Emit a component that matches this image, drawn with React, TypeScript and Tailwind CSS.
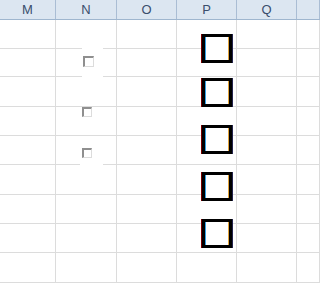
const cols = [
  { name: "M", w: "w-[56px]" },
  { name: "N", w: "w-[61px]" },
  { name: "O", w: "w-[60px]" },
  { name: "P", w: "w-[60px]" },
  { name: "Q", w: "w-[60px]" },
  { name: "", w: "flex-1" },
];

const rowHeights = [29, 28, 30, 29, 29, 30, 29, 29, 30];

const bigBoxes = [34, 78, 125, 172, 219];

const smallBoxes = [
  { top: 56, left: 83, size: "w-[11px] h-[11px]" },
  { top: 107, left: 82, size: "w-[10px] h-[10px]" },
  { top: 148, left: 82, size: "w-[10px] h-[10px]" },
];

function SmallCheck({ top, left, size }: { top: number; left: number; size: string }) {
  return (
    <div
      className={`absolute ${size} bg-white border-t-2 border-l-2 border-r border-b border-t-[#8f8f8f] border-l-[#8f8f8f] border-r-[#dcdcdc] border-b-[#dcdcdc]`}
      style={{ top, left }}
    />
  );
}

function BigCheck({ top }: { top: number }) {
  return (
    <div
      className="absolute left-[202px] w-[30px] h-[29px] bg-white border-[3px] border-black shadow-[-1px_0_0_#7a0000,1px_0_0_#24244e,inset_1px_0_0_#35a0e6,inset_-1px_0_0_#e2a43a]"
      style={{ top }}
    />
  );
}

export default function App() {
  return (
    <div className="relative w-[320px] h-[287px] overflow-hidden bg-white font-['Liberation_Sans',Arial,sans-serif]">
      {/* column headers */}
      <div className="flex h-[20px] bg-[#dce6f1] border-b border-[#9fb6cf]">
        {cols.map((c, i) => (
          <div
            key={i}
            className={`${c.w} shrink-0 flex items-center justify-center pt-px border-r border-[#aabdd4] text-[13px] text-[#3a4e6c]`}
          >
            {c.name}
          </div>
        ))}
      </div>

      {/* grid body */}
      {rowHeights.map((h, r) => (
        <div key={r} className="flex" style={{ height: h }}>
          {cols.map((c, i) => (
            <div key={i} className={`${c.w} shrink-0 border-r border-b border-[#dcdcdc]`} />
          ))}
        </div>
      ))}

      {/* form controls floating over the sheet */}
      <div className="absolute left-[82px] top-[44px] w-[21px] h-[36px] bg-white" />
      <div className="absolute left-[80px] top-[140px] w-[23px] h-[28px] bg-white" />
      {smallBoxes.map((b, i) => (
        <SmallCheck key={i} {...b} />
      ))}
      {bigBoxes.map((t) => (
        <BigCheck key={t} top={t} />
      ))}
    </div>
  );
}
